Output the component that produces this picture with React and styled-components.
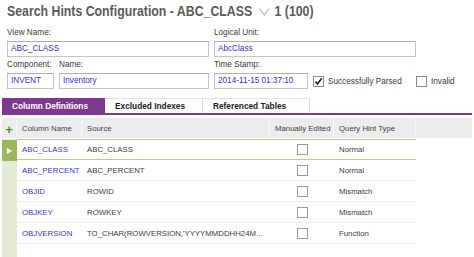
import React from "react";
import styled, { createGlobalStyle } from "styled-components";

const GlobalStyle = createGlobalStyle`
  body {
    margin: 0;
    background: #ffffff;
    font-family: "Liberation Sans", Arial, sans-serif;
  }
`;

const columns = [
  { key: "name", label: "Column Name", width: 65 },
  { key: "source", label: "Source", width: 188 },
  { key: "edited", label: "Manually Edited", width: 64 },
  { key: "hint", label: "Query Hint Type", width: 82 },
];

const rows = [
  { name: "ABC_CLASS", source: "ABC_CLASS", hint: "Normal" },
  { name: "ABC_PERCENT", source: "ABC_PERCENT", hint: "Normal" },
  { name: "OBJID", source: "ROWID", hint: "Mismatch" },
  { name: "OBJKEY", source: "ROWKEY", hint: "Mismatch" },
  { name: "OBJVERSION", source: "TO_CHAR(ROWVERSION,'YYYYMMDDHH24M...", hint: "Function" },
];

const tabs = [
  { label: "Column Definitions", width: 103, active: true },
  { label: "Excluded Indexes", width: 98 },
  { label: "Referenced Tables", width: 107 },
];

const App = () => {
  return (
    <Page>
      <GlobalStyle />
      <Title>
        <TitleText>
          Search Hints Configuration - ABC_CLASS
          <Chevron width="13" height="8" viewBox="0 0 13 8">
            <polyline points="0.5,0.5 6.5,7 12.5,0.5" fill="none" stroke="#a0a0a0" strokeWidth="1.1" />
          </Chevron>
          1 (100)
        </TitleText>
      </Title>

      <Form>
        <FormRow>
          <Field $width={202}>
            <Label>View Name:</Label>
            <Input>ABC_CLASS</Input>
          </Field>
          <Field $width={202}>
            <Label>Logical Unit:</Label>
            <Input>AbcClass</Input>
          </Field>
        </FormRow>
        <FormRow>
          <Field $width={47}>
            <Label>Component:</Label>
            <Input>INVENT</Input>
          </Field>
          <Field $width={150}>
            <Label>Name:</Label>
            <Input>Inventory</Input>
          </Field>
          <Field $width={94}>
            <Label>Time Stamp:</Label>
            <Input>2014-11-15 01:37:10</Input>
          </Field>
          <CheckLabel $width={98}>
            <Box>
              <svg width="9" height="9" viewBox="0 0 9 9">
                <polyline points="1.5,4.5 3.5,7 7.8,1.2" fill="none" stroke="#222" strokeWidth="1.6" />
              </svg>
            </Box>
            Successfully Parsed
          </CheckLabel>
          <CheckLabel>
            <Box />
            Invalid
          </CheckLabel>
        </FormRow>
      </Form>

      <TabBar>
        {tabs.map((tab) => (
          <Tab key={tab.label} $width={tab.width} $active={tab.active}>
            {tab.label}
          </Tab>
        ))}
      </TabBar>

      <Grid>
        <HeaderRow>
          <Indicator>
            <Plus>+</Plus>
          </Indicator>
          {columns.map((col) => (
            <HeaderCell key={col.key} $width={col.width}>
              {col.label}
            </HeaderCell>
          ))}
          <Filler />
        </HeaderRow>
        <Body>
          <IndicatorColumn>
            <CurrentMark>
              <svg width="5" height="6" viewBox="0 0 5 6">
                <polygon points="0,0 5,3 0,6" fill="#ffffff" />
              </svg>
            </CurrentMark>
          </IndicatorColumn>
          <RowList>
            {rows.map((row, index) => (
              <Row key={row.name} $current={index === 0}>
                <Cell $width={65} $link>
                  {row.name}
                </Cell>
                <Cell $width={188}>{row.source}</Cell>
                <Cell $width={64} $center>
                  <GridBox />
                </Cell>
                <Cell $width={82}>{row.hint}</Cell>
              </Row>
            ))}
          </RowList>
        </Body>
      </Grid>
    </Page>
  );
};

const Page = styled.div`
  width: 474px;
  height: 257px;
  padding: 1px 2px 0;
  box-sizing: border-box;
  overflow: hidden;
`;

const Title = styled.div`
  height: 20px;
  padding-left: 5px;
`;

/* the original heading uses a condensed face, none is installed */
const TitleText = styled.div`
  display: inline-flex;
  align-items: center;
  height: 20px;
  font-family: "Liberation Sans", Arial, sans-serif;
  font-weight: 700;
  font-size: 15.4px;
  color: #5b5b5b;
  white-space: nowrap;
  transform: scaleX(0.8);
  transform-origin: left center;
`;

const Chevron = styled.svg`
  margin: 1px 6px 0 9px;
`;

const Form = styled.div`
  display: flex;
  flex-direction: column;
  gap: 3px;
  margin-top: 7px;
  padding-left: 5px;
`;

const FormRow = styled.div`
  display: flex;
  align-items: flex-end;
  gap: 5px;
`;

const Field = styled.div`
  display: flex;
  flex-direction: column;
  gap: 3px;
  width: ${(p) => p.$width}px;
`;

const Label = styled.div`
  font-size: 8.2px;
  line-height: 10px;
  color: #3a3a3a;
  white-space: nowrap;
`;

const Input = styled.div`
  height: 16px;
  box-sizing: border-box;
  border: 1px solid #c4c4c4;
  border-top-color: #b0b0b0;
  padding: 0 3px;
  font-size: 8.2px;
  line-height: 14px;
  color: #3434c8;
  background: #ffffff;
  white-space: nowrap;
`;

const CheckLabel = styled.div`
  display: flex;
  align-items: center;
  gap: 4px;
  height: 16px;
  width: ${(p) => (p.$width ? `${p.$width}px` : "auto")};
  font-size: 8.2px;
  color: #3a3a3a;
  white-space: nowrap;
`;

const Box = styled.span`
  display: flex;
  align-items: center;
  justify-content: center;
  width: 11px;
  height: 11px;
  box-sizing: border-box;
  border: 1px solid #8c8c8c;
  background: #ffffff;
`;

const TabBar = styled.div`
  display: flex;
  margin-top: 9px;
  border-bottom: 2px solid #7d3a8c;
`;

const Tab = styled.div`
  width: ${(p) => p.$width}px;
  height: 15px;
  box-sizing: border-box;
  display: flex;
  align-items: center;
  padding-left: 10px;
  font-size: 8.3px;
  font-weight: 700;
  color: ${(p) => (p.$active ? "#ffffff" : "#222222")};
  background: ${(p) => (p.$active ? "#7d3a8c" : "#ffffff")};
  border-top: 1px solid ${(p) => (p.$active ? "#7d3a8c" : "#e2e2e2")};
  border-right: 1px solid ${(p) => (p.$active ? "#7d3a8c" : "#dcdcdc")};
  white-space: nowrap;
`;

const Grid = styled.div`
  margin-top: 3px;
  font-size: 7.8px;
`;

const HeaderRow = styled.div`
  display: flex;
  height: 20px;
  background: #ececec;
`;

const Indicator = styled.div`
  width: 15px;
  display: flex;
  align-items: center;
  justify-content: center;
  border-right: 1px solid #f6f6f6;
  box-sizing: border-box;
`;

const Plus = styled.span`
  font-size: 13px;
  font-weight: 700;
  color: #3c9a2c;
  line-height: 1;
  margin-top: 2px;
`;

const HeaderCell = styled.div`
  width: ${(p) => p.$width}px;
  box-sizing: border-box;
  display: flex;
  align-items: center;
  padding-left: 5px;
  color: #444444;
  border-right: 1px solid #f7f7f7;
  white-space: nowrap;
`;

const Filler = styled.div`
  flex: 1;
`;

const Body = styled.div`
  display: flex;
  margin-top: 1px;
`;

const IndicatorColumn = styled.div`
  width: 15px;
  height: 120px;
  background: #e4ead6;
`;

const CurrentMark = styled.div`
  height: 21px;
  margin-top: 1px;
  background: #9ab85c;
  display: flex;
  align-items: center;
  justify-content: center;
`;

const RowList = styled.div`
  display: flex;
  flex-direction: column;
`;

const Row = styled.div`
  display: flex;
  height: 21px;
  box-sizing: border-box;
  border-top: 1px solid ${(p) => (p.$current ? "#bfcc94" : "transparent")};
  border-bottom: 1px solid ${(p) => (p.$current ? "#bfcc94" : "#ebebeb")};
`;

const Cell = styled.div`
  width: ${(p) => p.$width}px;
  box-sizing: border-box;
  display: flex;
  align-items: center;
  justify-content: ${(p) => (p.$center ? "center" : "flex-start")};
  padding-left: ${(p) => (p.$center ? "0" : "5px")};
  color: ${(p) => (p.$link ? "#3535c6" : "#3c3c3c")};
  white-space: nowrap;
  overflow: hidden;
`;

const GridBox = styled.span`
  width: 11px;
  height: 11px;
  box-sizing: border-box;
  border: 1px solid #9a9a9a;
  background: #ffffff;
`;

export default App;
